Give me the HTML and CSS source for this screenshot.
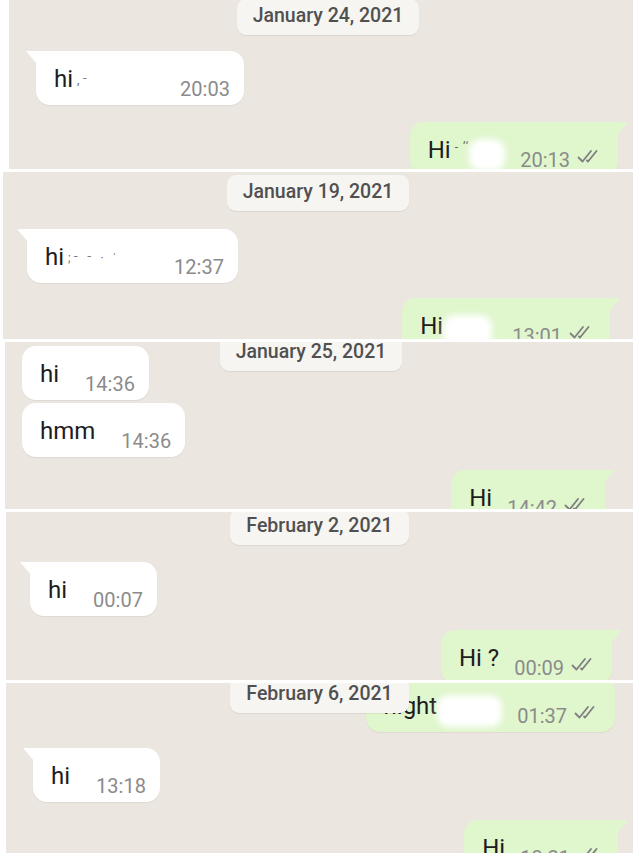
FILE: index.html
```html
<!DOCTYPE html>
<html>
<head>
<title>Chat screenshots</title>
<link rel="stylesheet" href="styles.css">
</head>
<body>

<div class="collage">

    <section class="panel p1">
        <div class="chip">January 24, 2021</div>
        <div class="bubble in tail">
            <span class="msg">hi</span><span class="gap w81"><span class="scrap">,⁻</span></span><span class="time">20:03</span>
        </div>
        <div class="bubble out tail">
            <span class="msg">Hi</span><span class="scrap dark">- ’‘</span><span class="blot w36"></span><span class="time">20:13</span>
            <svg class="ticks" viewBox="0 0 26 16"><path d="M1.5 8.5 L5.5 12.5 L14 2 M10 11.5 L11 12.5 L19.5 2"/></svg>
        </div>
    </section>

    <section class="panel p2">
        <div class="chip">January 19, 2021</div>
        <div class="bubble in tail">
            <span class="msg">hi</span><span class="gap w84"><span class="scrap">;⁻ ⁻ · ˈ</span></span><span class="time">12:37</span>
        </div>
        <div class="bubble out tail">
            <span class="msg">Hi</span><span class="blot w49"><span class="dots">.....</span></span><span class="time">13:01</span>
            <svg class="ticks" viewBox="0 0 26 16"><path d="M1.5 8.5 L5.5 12.5 L14 2 M10 11.5 L11 12.5 L19.5 2"/></svg>
        </div>
    </section>

    <section class="panel p3">
        <div class="chip">January 25, 2021</div>
        <div class="bubble in first">
            <span class="msg">hi</span><span class="time">14:36</span>
        </div>
        <div class="bubble in second">
            <span class="msg">hmm</span><span class="time">14:36</span>
        </div>
        <div class="bubble out tail">
            <span class="msg">Hi</span><span class="time">14:42</span>
            <svg class="ticks" viewBox="0 0 26 16"><path d="M1.5 8.5 L5.5 12.5 L14 2 M10 11.5 L11 12.5 L19.5 2"/></svg>
        </div>
    </section>

    <section class="panel p4">
        <div class="chip">February 2, 2021</div>
        <div class="bubble in tail">
            <span class="msg">hi</span><span class="time">00:07</span>
        </div>
        <div class="bubble out tail">
            <span class="msg">Hi ?</span><span class="time">00:09</span>
            <svg class="ticks" viewBox="0 0 26 16"><path d="M1.5 8.5 L5.5 12.5 L14 2 M10 11.5 L11 12.5 L19.5 2"/></svg>
        </div>
    </section>

    <section class="panel p5">
        <div class="bubble out prev">
            <span class="msg">night</span><span class="blot w65"></span><span class="time">01:37</span>
            <svg class="ticks" viewBox="0 0 26 16"><path d="M1.5 8.5 L5.5 12.5 L14 2 M10 11.5 L11 12.5 L19.5 2"/></svg>
        </div>
        <div class="chip">February 6, 2021</div>
        <div class="bubble in tail">
            <span class="msg">hi</span><span class="time">13:18</span>
        </div>
        <div class="bubble out tail">
            <span class="msg">Hi</span><span class="time">13:21</span>
            <svg class="ticks" viewBox="0 0 26 16"><path d="M1.5 8.5 L5.5 12.5 L14 2 M10 11.5 L11 12.5 L19.5 2"/></svg>
        </div>
    </section>

</div>

</body>
</html>
```

FILE: styles.css
```css
body {
    margin: 0;
    background-color: #fff;
    font-family: Roboto, "Liberation Sans", Arial, sans-serif;
}
.collage {
    display: flex;
    flex-direction: column;
    gap: 3px;
    width: 640px;
    height: 853px;
    overflow: hidden;
}
.panel {
    display: flex;
    flex-direction: column;
    align-items: flex-start;
    overflow: hidden;
    background-color: #ebe6df;
}

/* date separator */
.chip {
    position: relative;
    z-index: 2;
    align-self: center;
    flex-shrink: 0;
    height: 36px;
    padding: 0 16px;
    line-height: 34px;
    font-size: 19.5px;
    font-weight: 500;
    color: #505050;
    background-color: #f6f5f2;
    border-radius: 9px;
    box-shadow: 0 1px 1px rgba(0, 0, 0, 0.07);
}

/* message bubbles */
.bubble {
    position: relative;
    display: flex;
    align-items: flex-end;
    flex-shrink: 0;
    height: 54px;
    box-sizing: border-box;
    padding: 14px 15px 4px 18px;
    border-radius: 14px;
    box-shadow: 0 1px 1px rgba(0, 0, 0, 0.06);
}
.bubble.in {
    background-color: #fff;
    padding-right: 14px;
}
.bubble.out {
    align-self: flex-end;
    background-color: #e0f6cd;
}
.bubble.in.tail {
    border-top-left-radius: 0;
}
.bubble.out.tail {
    border-top-right-radius: 0;
}
.bubble.tail::before {
    content: "";
    position: absolute;
    top: 0;
    width: 11px;
    height: 13px;
}
.bubble.in.tail::before {
    left: -10px;
    background-color: #fff;
    clip-path: polygon(0 0, 100% 0, 100% 100%);
}
.bubble.out.tail::before {
    right: -10px;
    background-color: #e0f6cd;
    clip-path: polygon(0 0, 100% 0, 0 100%);
}
.msg {
    margin-bottom: 8px;
    font-size: 24px;
    line-height: 28px;
    color: #1d1d1d;
    white-space: nowrap;
}
.time {
    margin-left: 26px;
    font-size: 20px;
    line-height: 24px;
    color: #8b8b8b;
    white-space: nowrap;
}
.bubble.out .time {
    margin-left: 15px;
}
.blot + .time,
.gap + .time {
    margin-left: 0;
}
.ticks {
    width: 26px;
    height: 16px;
    margin: 0 0 7px 7px;
    fill: none;
    stroke: #7f7f7f;
    stroke-width: 1.8;
    stroke-linecap: round;
    stroke-linejoin: round;
}

/* blanked out parts of the messages */
.gap {
    align-self: stretch;
    padding-top: 4px;
}
.scrap {
    font-size: 12px;
    color: #666;
    letter-spacing: 3px;
    padding-left: 4px;
}
.scrap.dark {
    align-self: flex-start;
    padding-top: 4px;
    letter-spacing: 1px;
}
.blot {
    position: relative;
    align-self: center;
    height: 32px;
    margin-top: 2px;
    background-color: #fff;
    border-radius: 12px;
    filter: blur(3px);
}
.dots {
    display: block;
    padding: 14px 0 0 6px;
    font-size: 14px;
    letter-spacing: 3px;
    color: #bbb;
}
.w36 { width: 36px; }
.w49 { width: 49px; margin-right: 5px; }
.w65 { width: 65px; }
.w81 { width: 107px; }
.w84 { width: 110px; }

/* panel 1 */
.p1 {
    height: 169px;
    margin-left: 9px;
    width: 624px;
}
.p1 .chip { margin-top: -1px; margin-left: 14px; }
.p1 .in { margin-top: 16px; margin-left: 27px; }
.p1 .out { margin-top: 17px; margin-right: 15px; }

/* panel 2 */
.p2 {
    height: 167px;
    margin-left: 3px;
    width: 630px;
}
.p2 .chip { margin-top: 3px; }
.p2 .in { margin-top: 18px; margin-left: 24px; }
.p2 .out { margin-top: 15px; margin-right: 23px; }

/* panel 3 */
.p3 {
    height: 167px;
    margin-left: 5px;
    width: 628px;
}
.p3 .chip { margin-top: -7px; margin-right: 16px; }
.p3 .first { margin-top: -25px; margin-left: 17px; }
.p3 .second { margin-top: 3px; margin-left: 17px; }
.p3 .out { margin-top: 13px; margin-right: 28px; }

/* panel 4 */
.p4 {
    height: 168px;
    margin-left: 6px;
    width: 627px;
}
.p4 .chip { margin-top: -3px; }
.p4 .in { margin-top: 17px; margin-left: 24px; }
.p4 .out { margin-top: 14px; margin-right: 21px; }

/* panel 5 */
.p5 {
    height: 170px;
    margin-left: 6px;
    width: 627px;
}
.p5 .prev { margin-top: -5px; margin-right: 18px; }
.p5 .chip { margin-top: -55px; }
.p5 .in { margin-top: 35px; margin-left: 27px; }
.p5 .out.tail { margin-top: 18px; margin-right: 15px; }
```
